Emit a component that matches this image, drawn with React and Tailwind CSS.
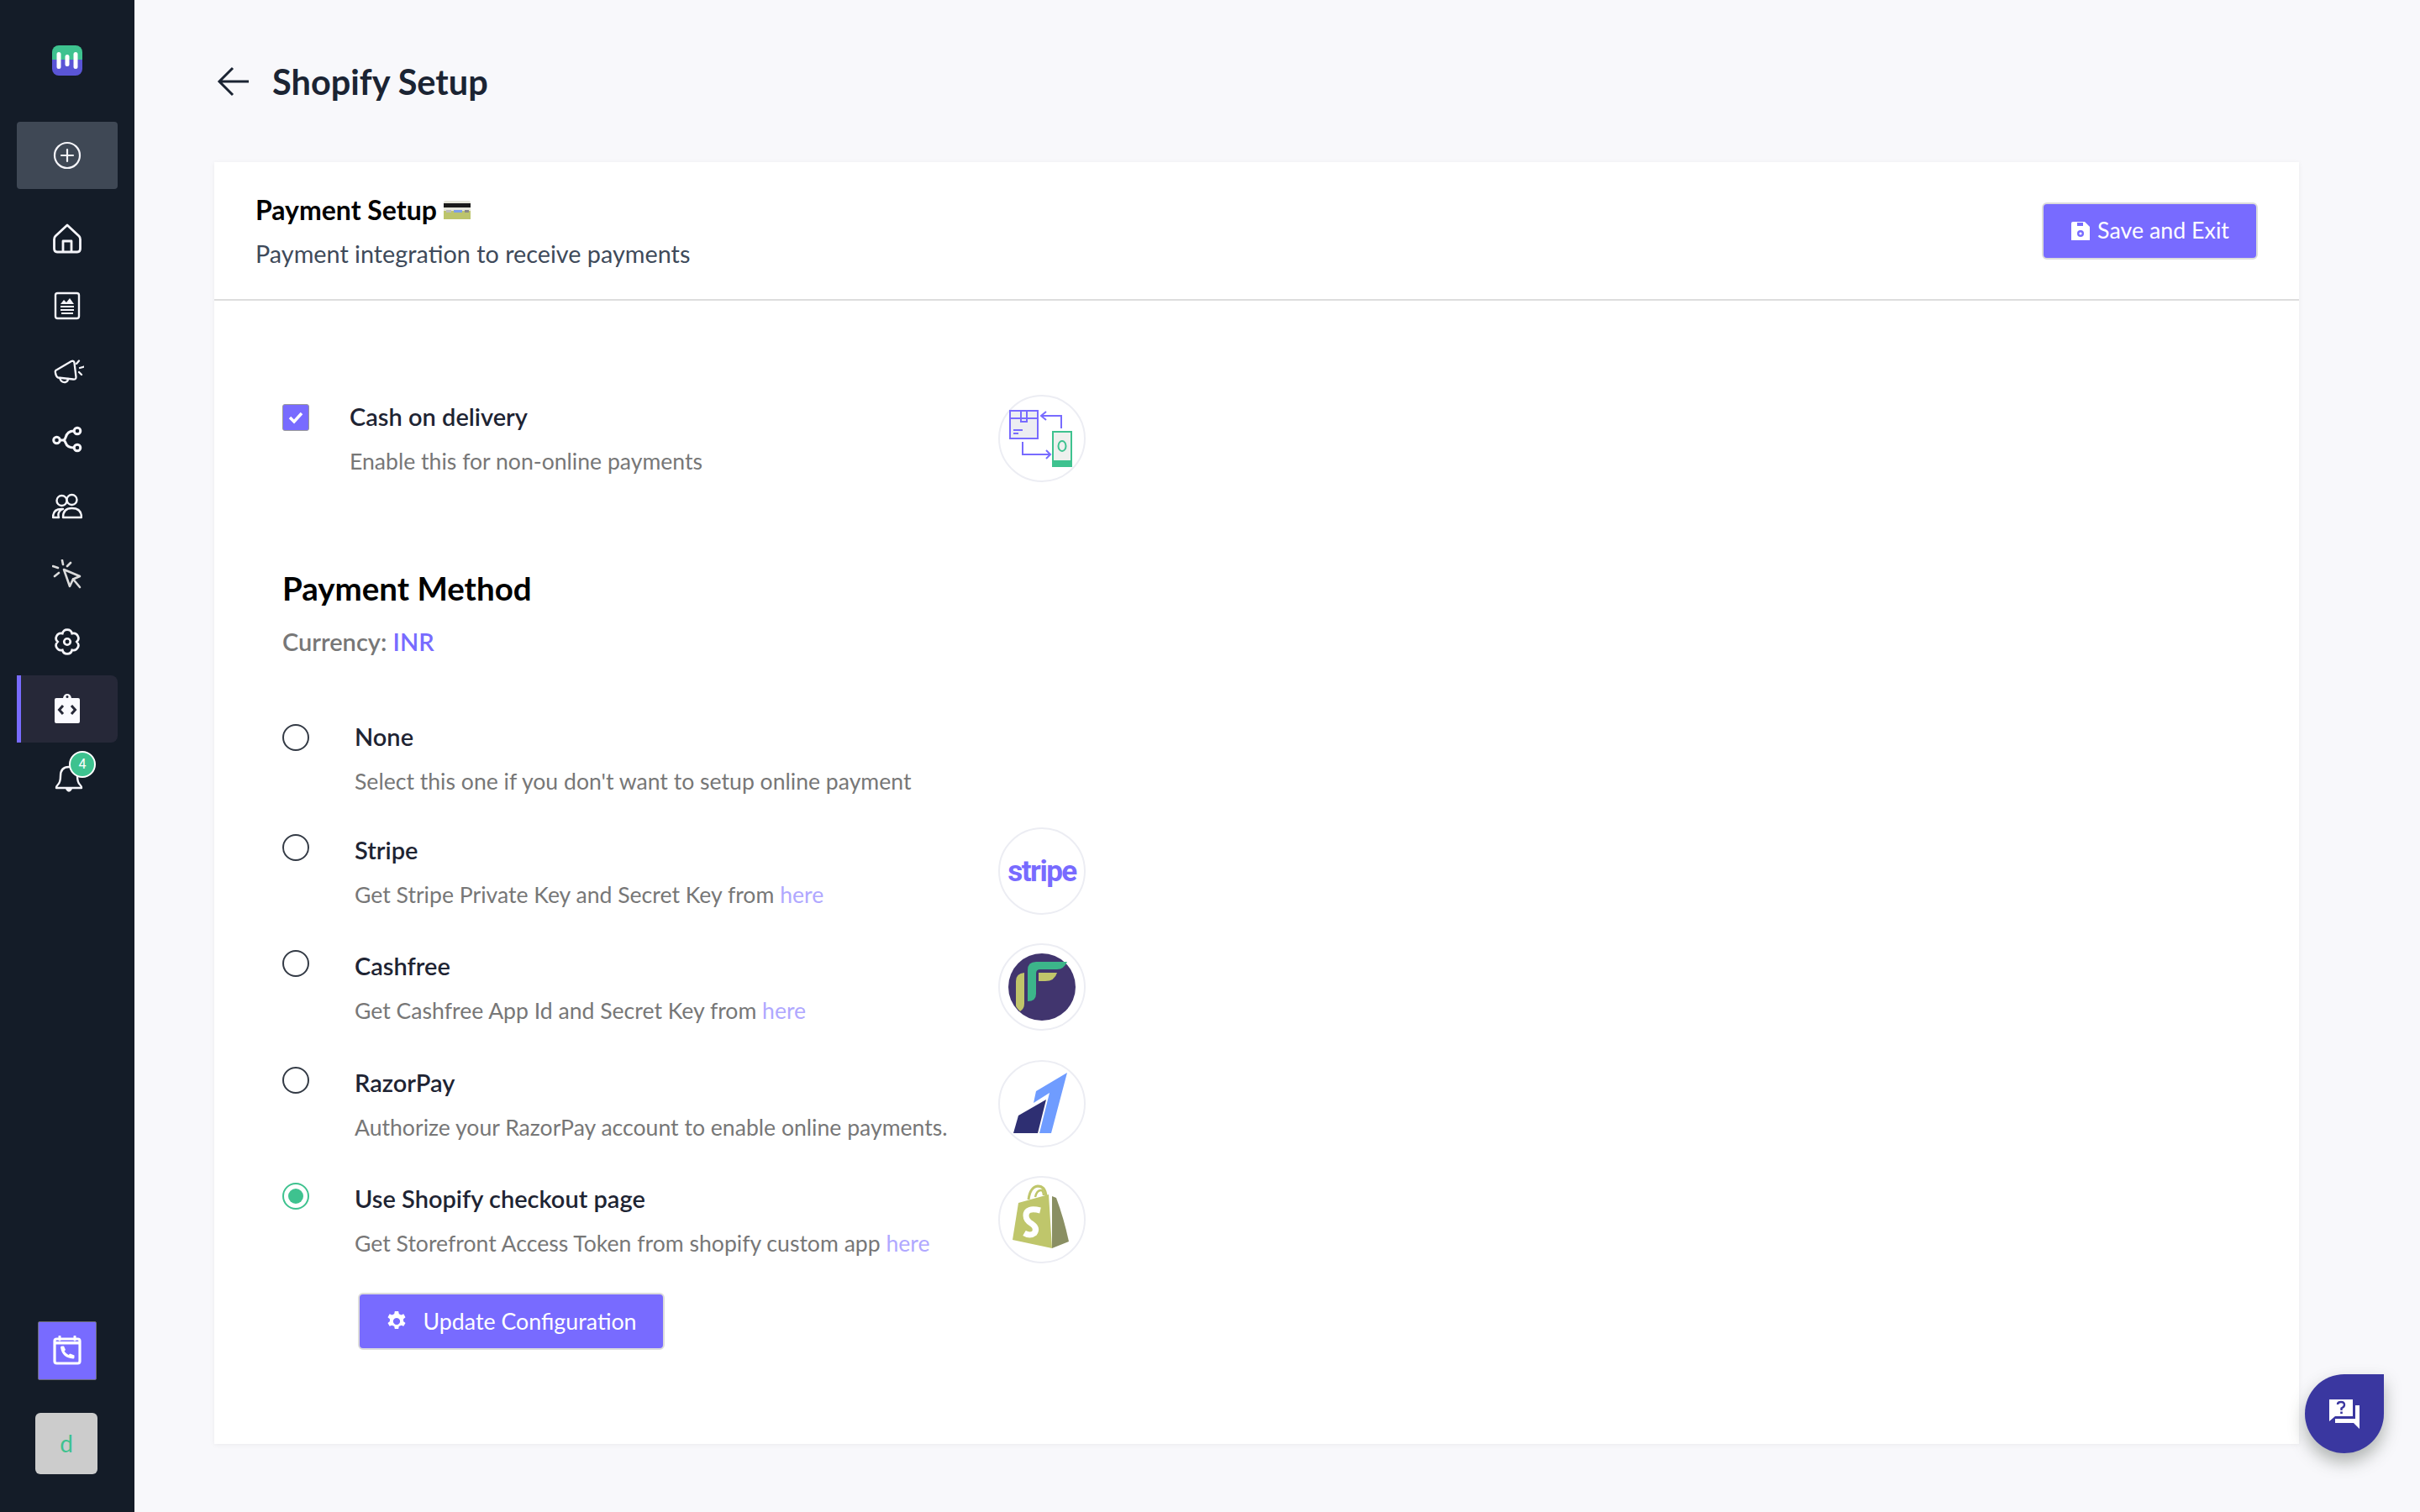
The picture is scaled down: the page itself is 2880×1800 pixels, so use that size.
import React from 'react';

const Logo = () => (
  <svg width="36" height="36" viewBox="0 0 36 36">
    <defs>
      <clipPath id="logoClip"><rect width="36" height="36" rx="8" /></clipPath>
    </defs>
    <g clipPath="url(#logoClip)">
      <rect width="36" height="18" fill="#3ec28f" />
      <rect y="17" width="36" height="19" fill="#5a55d6" />
    </g>
    <rect x="5.500" y="8" width="5" height="20" rx="2.500" fill="#fff" />
    <rect x="15.500" y="11" width="5" height="14" rx="2.500" fill="#fff" />
    <rect x="25.500" y="8" width="5" height="20" rx="2.500" fill="#fff" />
  </svg>
);

const icon = 'w-[36px] h-[36px] text-[#f5f5fa]';

const PlusIcon = () => (
  <svg className={icon} viewBox="0 0 36 36" fill="none" stroke="currentColor" strokeWidth="2.200" strokeLinecap="round">
    <circle cx="18" cy="18" r="15" />
    <path d="M18 11v14M11 18h14" />
  </svg>
);

const HomeIcon = () => (
  <svg className={icon} viewBox="0 0 36 36" fill="none" stroke="currentColor" strokeWidth="2.800" strokeLinejoin="round">
    <path d="M18 2 L32 15 Q33.500 16.500 33.500 19 V30 Q33.500 34 30 34 H6 Q2.500 34 2.500 30 V19 Q2.500 16.500 4 15 Z" />
    <path d="M13 34 V21 H23 V34" />
  </svg>
);

const ReportIcon = () => (
  <svg className={icon} viewBox="0 0 36 36" fill="none" stroke="currentColor" strokeWidth="2">
    <rect x="4" y="3" width="28" height="30" rx="2.500" strokeWidth="2.400" />
    <path d="M10 16 L14 11 L17 14 L21 9 L26 16 Z" fill="currentColor" stroke="none" />
    <path d="M10 19h16M10 23h16M11 27h14" />
  </svg>
);

const MegaphoneIcon = () => (
  <svg className={`${icon} ml-[3px] mt-[2px]`} viewBox="0 0 36 36" fill="none" stroke="currentColor" strokeWidth="2.300" strokeLinecap="round" strokeLinejoin="round">
    <path d="M2 17 Q1 14 4 13 L21 3 Q24 2 24.500 5 L26.500 22 Q26.500 25 23 24.500 L5 22.500 Q2.500 21 2 17 Z" />
    <path d="M7 23 Q9 29 14 28 Q17 27 17 24" />
    <path d="M27 6 L30 2.500 M31 11 L36 9.500 M30 16 L33 19" />
  </svg>
);

const FlowIcon = () => (
  <svg className={icon} viewBox="0 0 36 36" fill="none" stroke="currentColor" strokeWidth="3">
    <circle cx="5.500" cy="18" r="3.800" />
    <circle cx="30" cy="7" r="3.800" />
    <circle cx="30" cy="27" r="3.800" />
    <path d="M9.500 18 H13 Q15 18 16 15 Q18 7 26 7 M13 18 Q15 18 16 21 Q18 27 26 27" />
  </svg>
);

const PeopleIcon = () => (
  <svg className={icon} viewBox="0 0 36 36" fill="none" stroke="currentColor" strokeWidth="2.400" strokeLinejoin="round">
    <circle cx="11.500" cy="10" r="6" />
    <circle cx="23.500" cy="9" r="6" />
    <path d="M1 30 Q1 20 11 20 H13 Q5.500 23 8 30 Z" />
    <path d="M13 30 Q13 19 23.500 19 Q35 19 35 30 Z" />
  </svg>
);

const ClickIcon = () => (
  <svg className={icon} viewBox="0 0 36 36" fill="none" stroke="#dcdcdc" strokeWidth="2.600" strokeLinecap="round" strokeLinejoin="round">
    <path d="M14 12 L33 20 L25 23.500 L21 32 Z" />
    <path d="M25 23.500 L33 33" />
    <path d="M12 1 L13 6 M22 4 L18 8 M1 8 L7 10 M3 20 L8 16" />
  </svg>
);

const GearIcon = () => (
  <svg className={icon} viewBox="0 0 24 24" fill="none" stroke="currentColor" strokeWidth="1.800">
    <path d="M15.800 5.420 A3.900 3.900 0 0 0 8.200 5.420 A3.900 3.900 0 0 0 4.400 12 A3.900 3.900 0 0 0 8.200 18.580 A3.900 3.900 0 0 0 15.800 18.580 A3.900 3.900 0 0 0 19.600 12 A3.900 3.900 0 0 0 15.800 5.420 Z" />
    <circle cx="12" cy="12" r="2.500" />
  </svg>
);

const CodeClipIcon = () => (
  <svg className={icon} viewBox="0 0 36 36">
    <path d="M5 5 H13 Q14 0 18 0 Q22 0 23 5 H31 Q33 5 33 7 V33 Q33 35 31 35 H5 Q3 35 3 33 V7 Q3 5 5 5 Z" fill="#fafaff" />
    <circle cx="18" cy="3.500" r="1.500" fill="#262838" />
    <path d="M13 14 L8.500 19 L13 24 M23 14 L27.500 19 L23 24" fill="none" stroke="#262838" strokeWidth="3" />
  </svg>
);

const BellIcon = () => (
  <svg className="h-[36px] w-[36px] text-[#f5f5fa]" viewBox="0 0 36 36" fill="none" stroke="currentColor" strokeWidth="2.400" strokeLinejoin="round">
    <path d="M3 30 Q3 28 5 26 Q8 23 8 16 Q8 5 18 5 Q28 5 28 16 Q28 23 31 26 Q33 28 33 30 Z" />
    <path d="M15 31 Q18 36 21 31" fill="currentColor" />
  </svg>
);

const CallIcon = () => (
  <svg className="h-[36px] w-[36px]" viewBox="0 0 36 36" fill="none">
    <rect x="3" y="4" width="30" height="29" rx="2.500" stroke="#fff" strokeWidth="3.200" />
    <path d="M3 7 H33 V10.500 H3 Z" fill="#fff" />
    <path d="M9 1 V5 M27 1 V5" stroke="#fff" strokeWidth="3" strokeLinecap="round" />
    <path d="M10 14 Q10 12.500 11.500 12.500 H14 L16 17 L14.500 18.500 Q16.500 21.500 19.500 23 L21.500 21.500 L26.500 23.500 V26 Q26.500 27.500 25 27.500 Q12 26.500 10 14 Z" fill="#fff" />
  </svg>
);

const SaveIcon = () => (
  <svg width="24" height="24" viewBox="0 0 24 24">
    <path d="M1 3 Q1 1 3 1 H17 L23 7 V23 H1 Z" fill="#fff" />
    <rect x="8" y="2" width="7" height="4" fill="#786bff" />
    <circle cx="12" cy="15" r="4" fill="#786bff" />
    <circle cx="12" cy="15" r="1.600" fill="#fff" />
  </svg>
);

const CogSolid = () => (
  <svg width="26" height="26" viewBox="0 0 24 24" fill="#fff">
    <path fillRule="evenodd" d="M10 1 h4 l.6 3 q1.200.4 2.300 1.100 l2.800-1.100 2 3.500 -2.300 1.900 q.2 1.300 0 2.600 l2.300 1.900 -2 3.500 -2.800-1.100 q-1.100.8-2.300 1.100 l-.6 3 h-4 l-.6-3 q-1.200-.4-2.300-1.100 l-2.800 1.100 -2-3.500 2.300-1.900 q-.2-1.300 0-2.600 l-2.300-1.900 2-3.500 2.800 1.100 q1.100-.8 2.300-1.100 Z M12 8.200 a3.800 3.800 0 1 0 .01 0 Z" />
  </svg>
);

const HelpIcon = () => (
  <svg width="38" height="36" viewBox="0 0 38 36">
    <path d="M1 1 H29 V21 H8 L1 27 Z" fill="#fff" />
    <path d="M32 8 H37 V36 L30 29 H8 V24 H32 Z" fill="#fff" />
    <path d="M11 7 Q11 4 15 4 Q19 4 19 7.500 Q19 10 15.500 11.500 V14" fill="none" stroke="#3a37a0" strokeWidth="2.400" />
    <rect x="14.200" y="15.500" width="2.600" height="2.600" fill="#3a37a0" />
  </svg>
);

const CodIcon = () => (
  <svg width="100" height="100" viewBox="2 2 100 100" fill="none">
    <rect x="14" y="19" width="33" height="33" fill="#ecedf2" stroke="#786bff" strokeWidth="2" />
    <path d="M14 28 H47 M27 19 V32 H34 V19" stroke="#786bff" strokeWidth="2" />
    <path d="M18 42 H29 M18 46 H24" stroke="#786bff" strokeWidth="2" />
    <path d="M75 40 V25 H52 M57 20 L51 25 L57 30" stroke="#786bff" strokeWidth="2" />
    <path d="M29 56 V71 H61 M57 66 L62 71 L57 76" stroke="#786bff" strokeWidth="2" />
    <rect x="65" y="44" width="22" height="41" fill="#eef0ee" stroke="#3ec28f" strokeWidth="2" />
    <ellipse cx="76" cy="61" rx="4.500" ry="6" stroke="#3ec28f" strokeWidth="2" />
    <rect x="65" y="78" width="22" height="7" fill="#3ec28f" />
  </svg>
);

const CashfreeIcon = () => (
  <svg width="80" height="80" viewBox="0 0 80 80">
    <circle cx="40" cy="40" r="40" fill="#41356e" />
    <path d="M23 57 V20 Q23 10 33 10 H70 Q66 19 58 19 H38 Q33 19 33 24 V48 Q33 57 23 57 Z" fill="#3cb58a" />
    <path d="M36 23 H58 Q55 33 44 33 H36 Z" fill="#c0c46a" />
    <path d="M9 33 Q9 24 19 23 V60 Q19 66 14 69 Q9 64 9 62 Z" fill="#c0c46a" />
  </svg>
);

const RazorpayIcon = () => (
  <svg width="100" height="100" viewBox="2 2 100 100">
    <path d="M18 87 L24 66 L57 47 L47 87 Z" fill="#2e2f72" />
    <path d="M42 51 L45 37 L82 15 L63 87 H49 L61 39 Z" fill="#6f9cff" />
  </svg>
);

const ShopifyIcon = () => (
  <svg width="100" height="100" viewBox="2 2 100 100">
    <path d="M24 32 L60 22 L64 86 L17 76 Z" fill="#bfc66b" />
    <path d="M64 24 L69 26 Q78 50 84 78 L64 86 Z" fill="#8a8f63" />
    <path d="M36 28 Q38 13 47 12 Q56 12 57 24" fill="none" stroke="#bfc66b" strokeWidth="3" />
    <path d="M44 25 Q46 16 52 17 Q54 19 54 23" fill="none" stroke="#bfc66b" strokeWidth="2.500" />
    <path d="M50 41 Q33 37 33 47 Q33 53 40 57 Q47 62 43 68 Q38 72 31 68" fill="none" stroke="#fff" strokeWidth="7" />
  </svg>
);

const CardEmoji = () => (
  <svg width="32" height="22" viewBox="0 0 32 22" className="ml-[8px]">
    <rect width="32" height="22" rx="2" fill="#e6e6da" />
    <rect y="3" width="32" height="5" fill="#1a1a1a" />
    <rect y="12" width="32" height="10" fill="#bcc46c" />
    <rect x="12" y="11" width="10" height="3" fill="#7f9fe8" />
    <rect x="3" y="11" width="6" height="3" fill="#bbb" />
    <rect x="25" y="11" width="5" height="3" fill="#888" />
  </svg>
);

const LogoCircle = ({ children }) => (
  <div className="flex h-[104px] w-[104px] shrink-0 items-center justify-center rounded-full border-2 border-[#ecedf3] bg-white">
    {children}
  </div>
);

const Radio = ({ selected, className }) => (
  <span
    className={`flex h-[32px] w-[32px] shrink-0 items-center justify-center rounded-full border-2 ${
      selected ? 'border-[#3ec28f]' : 'border-[#333a45]'
    } ${className}`}
  >
    {selected && <span className="h-[18px] w-[18px] rounded-full bg-[#3ec28f]" />}
  </span>
);

const Here = () => <span className="text-[#b0a8ff]">here</span>;

const navIcons = [
  <HomeIcon key="home" />,
  <ReportIcon key="report" />,
  <MegaphoneIcon key="mega" />,
  <FlowIcon key="flow" />,
  <PeopleIcon key="people" />,
  <ClickIcon key="click" />,
  <GearIcon key="gear" />,
];

const methods = [
  {
    name: 'Stripe',
    desc: <>Get Stripe Private Key and Secret Key from <Here /></>,
    logo: <span className="font-[family-name:Roboto,sans-serif] text-[35px] font-bold leading-none tracking-[-1.500px] text-[#786bff]">stripe</span>,
  },
  {
    name: 'Cashfree',
    desc: <>Get Cashfree App Id and Secret Key from <Here /></>,
    logo: <CashfreeIcon />,
  },
  {
    name: 'RazorPay',
    desc: 'Authorize your RazorPay account to enable online payments.',
    logo: <RazorpayIcon />,
  },
  {
    name: 'Use Shopify checkout page',
    desc: <>Get Storefront Access Token from shopify custom app <Here /></>,
    logo: <ShopifyIcon />,
    selected: true,
  },
];

const Sidebar = () => (
  <aside className="flex min-h-screen w-[160px] shrink-0 flex-col items-center bg-[#141c28]">
    <div className="mt-[54px]">
      <Logo />
    </div>
    <button className="mt-[55px] flex h-[80px] w-[120px] items-center justify-center rounded-[4px] bg-[#3f4855]">
      <PlusIcon />
    </button>
    <nav className="mt-[19px] flex flex-col items-center">
      {navIcons.map((item, i) => (
        <div key={i} className="flex h-[80px] w-[120px] items-center justify-center">
          {item}
        </div>
      ))}
      <div className="flex h-[80px] w-[120px] items-center justify-center rounded-r-[8px] border-l-[5px] border-[#786bff] bg-[#262838] pr-[5px]">
        <CodeClipIcon />
      </div>
      <div className="relative flex h-[80px] w-[120px] items-center justify-center pl-[4px] pt-[4px]">
        <BellIcon />
        <span className="absolute left-[62px] top-[10px] flex h-[32px] w-[32px] items-center justify-center rounded-full border-2 border-white bg-[#3ec28f] font-[family-name:Roboto,sans-serif] text-[16px] text-white">
          4
        </span>
      </div>
    </nav>
    <div className="mt-auto flex flex-col items-center pb-[45px]">
      <button className="flex h-[70px] w-[70px] items-center justify-center rounded-[2px] border border-[#6c6c74] bg-[#786bff]">
        <CallIcon />
      </button>
      <div className="mr-[2px] mt-[39px] flex h-[73px] w-[74px] items-center justify-center rounded-[6px] bg-[#cccccc] pb-[2px] text-[28px] text-[#3ec28f]">
        d
      </div>
    </div>
  </aside>
);

export default function App() {
  return (
    <div className="relative flex min-h-screen bg-[#f8f8fb] font-[family-name:Lato,sans-serif]">
      <Sidebar />
      <main className="flex-1 pl-[95px] pr-[144px]">
        <div className="flex h-[193px] items-center">
          <svg width="42" height="36" viewBox="0 0 42 36" fill="none" stroke="#1b2433" strokeWidth="3" className="ml-[3px]">
            <path d="M38 18 H3 M19 2 L3 18 L19 34" />
          </svg>
          <h1 className="ml-[24px] pt-[2px] text-[41.500px] font-bold leading-none text-[#1b2433]">Shopify Setup</h1>
        </div>

        <section className="bg-white shadow-[0_1px_6px_rgba(0,0,0,0.06)]">
          <header className="flex h-[165px] items-center justify-between border-b-2 border-[#dddddd] px-[49px]">
            <div className="pt-[2px]">
              <div className="flex items-center text-[32px] font-bold leading-[40px] text-black">
                Payment Setup
                <CardEmoji />
              </div>
              <p className="mt-[12px] text-[28.800px] leading-[40px] text-[#3e4a5a]">Payment integration to receive payments</p>
            </div>
            <button className="flex h-[68px] w-[257px] items-center justify-center gap-[8px] rounded-[6px] border-2 border-[#dcdcdc] bg-[#786bff] text-[26.800px] text-white">
              <SaveIcon />
              Save and Exit
            </button>
          </header>

          <div className="pb-[112px] pl-[81px] pt-[112px]">
            <div className="flex h-[104px] w-[956px] items-start justify-between">
              <div className="flex">
                <span className="mt-[11px] flex h-[32px] w-[32px] items-center justify-center rounded-[3px] border border-[#9a9a9a] bg-[#786bff]">
                  <svg width="20" height="20" viewBox="0 0 20 20" fill="none" stroke="#fff" strokeWidth="3.500">
                    <path d="M3 10 L8 15 L17 5" />
                  </svg>
                </span>
                <div className="ml-[48px] pt-[8px]">
                  <div className="text-[29px] font-semibold leading-[36px] text-[#1e2433]">Cash on delivery</div>
                  <div className="mt-[17px] text-[26.600px] leading-[36px] text-[#777777]">Enable this for non-online payments</div>
                </div>
              </div>
              <LogoCircle><CodIcon /></LogoCircle>
            </div>

            <h2 className="mt-[102px] text-[38.500px] font-bold leading-[48px] text-black">Payment Method</h2>
            <p className="mt-[22px] text-[29px] font-semibold leading-[36px] text-[#777777]">
              Currency: <span className="text-[#786bff]">INR</span>
            </p>

            <div className="mt-[68px] flex h-[135px] w-[956px] items-start">
              <Radio className="mt-[12px]" />
              <div className="ml-[54px] pt-[9px]">
                <div className="text-[29px] font-semibold leading-[36px] text-[#1e2433]">None</div>
                <div className="mt-[17px] text-[26.600px] leading-[36px] text-[#777777]">Select this one if you don't want to setup online payment</div>
              </div>
            </div>

            <div className="flex flex-col gap-[34.300px]">
              {methods.map((m) => (
                <div key={m.name} className="flex h-[104px] w-[956px] items-start justify-between">
                  <div className="flex">
                    <Radio selected={m.selected} className="mt-[8px]" />
                    <div className="ml-[54px] pt-[9px]">
                      <div className="text-[29px] font-semibold leading-[36px] text-[#1e2433]">{m.name}</div>
                      <div className="mt-[17px] text-[26.600px] leading-[36px] text-[#777777]">{m.desc}</div>
                    </div>
                  </div>
                  <LogoCircle>{m.logo}</LogoCircle>
                </div>
              ))}
            </div>

            <button className="ml-[90px] mt-[35px] flex h-[68px] w-[365px] items-center justify-center gap-[18px] rounded-[6px] border-2 border-[#dcdcdc] bg-[#786bff] text-[26.800px] text-white">
              <CogSolid />
              Update Configuration
            </button>
          </div>
        </section>
      </main>

      <button className="absolute left-[2743px] top-[1636px] flex h-[94px] w-[94px] items-center justify-center rounded-full rounded-tr-[10px] bg-[#3a37a0] shadow-[0_10px_20px_rgba(60,70,60,0.4)]">
        <HelpIcon />
      </button>
    </div>
  );
}
